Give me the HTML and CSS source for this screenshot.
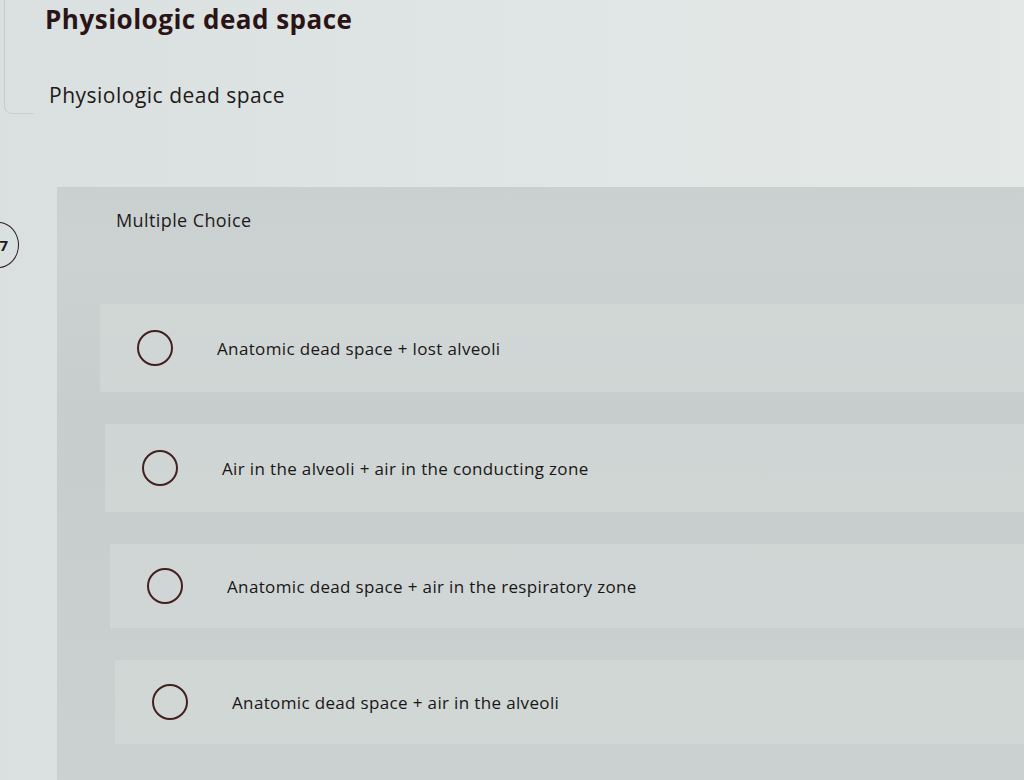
FILE: index.html
```html
<!DOCTYPE html>
<html>
<head>
<meta charset="utf-8">
<link rel="stylesheet" href="styles.css">
</head>
<body>
<div class="page">
  <header class="head">
    <div class="card-edge"></div>
    <h1 class="title">Physiologic dead space</h1>
    <p class="subtitle">Physiologic dead space</p>
  </header>
  <div class="badge">7</div>
  <section class="panel">
    <div class="qtype">Multiple Choice</div>
    <ul class="options">
      <li class="option o1"><span class="radio"></span><span class="label">Anatomic dead space + lost alveoli</span></li>
      <li class="option o2"><span class="radio"></span><span class="label">Air in the alveoli + air in the conducting zone</span></li>
      <li class="option o3"><span class="radio"></span><span class="label">Anatomic dead space + air in the respiratory zone</span></li>
      <li class="option o4"><span class="radio"></span><span class="label">Anatomic dead space + air in the alveoli</span></li>
    </ul>
  </section>
</div>
</body>
</html>
```
FILE: styles.css
```css
* { box-sizing: border-box; }
html, body {
  margin: 0;
  padding: 0;
  width: 1024px;
  height: 780px;
  overflow: hidden;
  background: #dde3e2;
  font-family: "Open Sans", Lato, "Liberation Sans", sans-serif;
  color: #1e1a1a;
}
.page {
  position: relative;
  width: 1024px;
  height: 780px;
  background: linear-gradient(90deg, #d9e0df 0%, #e0e6e5 55%, #e4e8e7 100%);
}
.head {
  position: relative;
  height: 187px;
  padding: 3px 0 0 45px;
}
.card-edge {
  position: absolute;
  left: 4px;
  top: -10px;
  width: 30px;
  height: 124px;
  border-left: 1px solid #c4cbca;
  border-bottom: 1px solid #c9d0cf;
  border-bottom-left-radius: 8px;
}
.title {
  margin: 0;
  font-size: 26px;
  font-weight: 700;
  color: #2a1416;
  line-height: 32px;
  letter-spacing: 0.5px;
}
.subtitle {
  margin: 47px 0 0 4px;
  font-size: 21px;
  font-weight: 400;
  color: #1f1a1a;
  line-height: 26px;
  letter-spacing: 0.5px;
}
.badge {
  position: absolute;
  left: -22px;
  top: 222px;
  width: 41px;
  height: 46px;
  border: 1.5px solid #2a1a1a;
  border-radius: 50%;
  font-weight: 700;
  font-size: 15px;
  color: #1e1a1a;
  display: flex;
  align-items: center;
  justify-content: flex-end;
  padding-right: 10px;
}
.panel {
  margin-left: 57px;
  height: 593px;
  background: linear-gradient(180deg, #c9d0cf 0%, #ccd2d1 10%, #c6cdcc 40%, #cbd1d0 100%);
  padding: 22px 0 0 59px;
}
.qtype {
  font-size: 18px;
  color: #1e1a1a;
  line-height: 22px;
  letter-spacing: 0.4px;
}
.options {
  list-style: none;
  margin: 73px 0 0 -16px;
  padding: 0;
  display: flex;
  flex-direction: column;
  gap: 32px;
}
.option {
  height: 88px;
  display: flex;
  align-items: center;
  background: rgba(214, 220, 219, 0.55);
  padding-left: 37px;
}
.o2 { margin-left: 5px; }
.o3 { margin-left: 10px; height: 84px; }
.o4 { margin-left: 15px; height: 84px; }
.radio {
  width: 36px;
  height: 36px;
  border: 2px solid #44201f;
  border-radius: 50%;
  flex: none;
}
.label {
  margin-left: 44px;
  font-size: 17px;
  color: #1a1616;
  letter-spacing: 0.35px;
}
```
